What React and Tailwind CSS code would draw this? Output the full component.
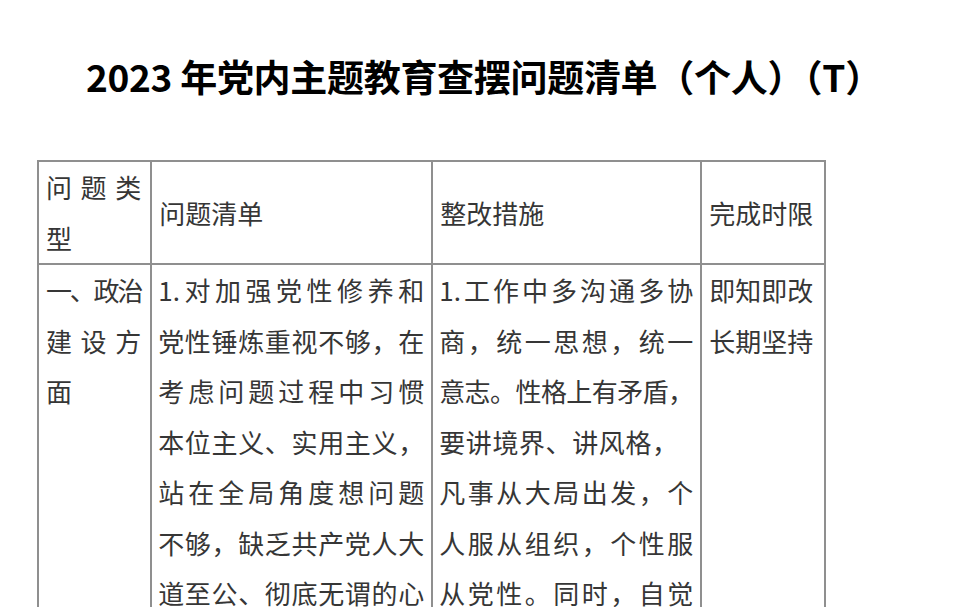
import React from 'react'

const font = { fontFamily: '"Noto Sans CJK SC", "Noto Sans", sans-serif' }

// one printed line of a cell; justified lines spread to the cell edges like the Word original
const Line = ({ text, j = true, tight = '' }) => (
    <div className={`h-[50.5px] leading-[50.5px] whitespace-nowrap ${j ? 'text-justify [text-align-last:justify]' : 'text-left'} ${tight}`}>
        {text}
    </div>
)

const rows = [
    {
        type: [
            { t: '一、政治', tight: 'tracking-[-2.2px]' },
            { t: '建设方' },
            { t: '面', j: false },
        ],
        list: [
            { t: '1.对加强党性修养和' },
            { t: '党性锤炼重视不够，在' },
            { t: '考虑问题过程中习惯' },
            { t: '本位主义、实用主义，' },
            { t: '站在全局角度想问题' },
            { t: '不够，缺乏共产党人大' },
            { t: '道至公、彻底无谓的心' },
            { t: '胸境界。', j: false },
        ],
        fix: [
            { t: '1.工作中多沟通多协' },
            { t: '商，统一思想，统一' },
            { t: '意志。性格上有矛盾，', tight: 'tracking-[-0.8px]' },
            { t: '要讲境界、讲风格，', j: false, tight: 'tracking-[0.6px]' },
            { t: '凡事从大局出发，个' },
            { t: '人服从组织，个性服' },
            { t: '从党性。同时，自觉' },
            { t: '加强党性修养。', j: false },
        ],
        time: [
            { t: '即知即改', j: false },
            { t: '长期坚持', j: false },
        ],
    },
]

const cellCls = 'border-2 border-[#8f8f8f] text-[26px] text-[#363636] font-normal'

export default function App() {
    return (
        <div className='min-h-screen bg-white overflow-hidden' style={font}>
            <h1 className='pt-[57px] pl-[86px] text-[37px] leading-[38px] font-bold text-black whitespace-nowrap tracking-[-0.3px]'>
                2023 年党内主题教育查摆问题清单（个人）（T）
            </h1>

            <table className='mt-[65px] ml-[37px] table-fixed border-collapse'>
                <colgroup>
                    <col className='w-[112px]' />
                    <col className='w-[281px]' />
                    <col className='w-[269px]' />
                    <col className='w-[124px]' />
                </colgroup>
                <thead>
                    <tr>
                        <th className={`${cellCls} align-top pl-[7px] pr-[9px]`}>
                            <Line text='问题类' />
                            <Line text='型' j={false} />
                        </th>
                        <th className={`${cellCls} align-middle text-left pl-[7px]`}>问题清单</th>
                        <th className={`${cellCls} align-middle text-left pl-[7px]`}>整改措施</th>
                        <th className={`${cellCls} align-middle text-left pl-[7px]`}>完成时限</th>
                    </tr>
                </thead>
                <tbody>
                    {rows.map((r, i) => (
                        <tr key={i}>
                            <td className={`${cellCls} align-top pl-[7px] pr-[9px]`}>
                                {r.type.map((l) => <Line key={l.t} text={l.t} j={l.j} tight={l.tight} />)}
                            </td>
                            <td className={`${cellCls} align-top pl-[6px] pr-[7px]`}>
                                {r.list.map((l) => <Line key={l.t} text={l.t} j={l.j} tight={l.tight} />)}
                            </td>
                            <td className={`${cellCls} align-top pl-[6px] pr-[7px]`}>
                                {r.fix.map((l) => <Line key={l.t} text={l.t} j={l.j} tight={l.tight} />)}
                            </td>
                            <td className={`${cellCls} align-top pl-[7px]`}>
                                {r.time.map((l) => <Line key={l.t} text={l.t} j={l.j} />)}
                            </td>
                        </tr>
                    ))}
                </tbody>
            </table>
        </div>
    )
}
